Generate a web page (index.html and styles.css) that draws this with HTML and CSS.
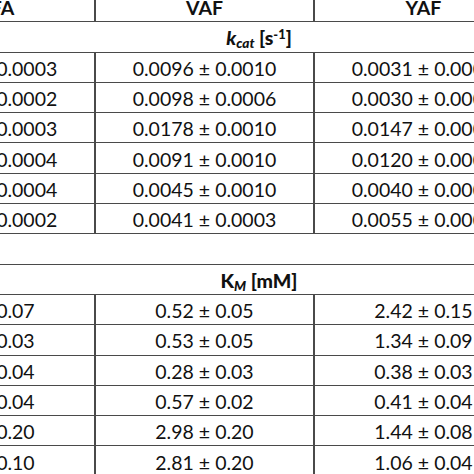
FILE: index.html
```html
<!DOCTYPE html>
<html>
<head>
<meta charset="utf-8">
<link rel="stylesheet" href="styles.css">
</head>
<body>
<div class="frame">
<table class="kin">
  <colgroup>
    <col class="c-label"><col class="c-data"><col class="c-data"><col class="c-data"><col class="c-data">
  </colgroup>
  <tr class="head">
    <th>Enzyme</th><th class="v first">AAFA</th><th class="v">VAF</th><th class="v">YAF</th><th class="v">AAF</th>
  </tr>
  <tr class="title">
    <td colspan="5"><b><i>k<sub>cat</sub></i> [s<sup>-1</sup>]</b></td>
  </tr>
  <tr><td>WT</td><td class="v">0.0101 ± 0.0003</td><td class="v">0.0096 ± 0.0010</td><td class="v">0.0031 ± 0.0002</td><td class="v">0.0012 ± 0.0001</td></tr>
  <tr><td>M1</td><td class="v">0.0089 ± 0.0002</td><td class="v">0.0098 ± 0.0006</td><td class="v">0.0030 ± 0.0002</td><td class="v">0.0011 ± 0.0001</td></tr>
  <tr><td>M2</td><td class="v">0.0112 ± 0.0003</td><td class="v">0.0178 ± 0.0010</td><td class="v">0.0147 ± 0.0007</td><td class="v">0.0024 ± 0.0002</td></tr>
  <tr><td>M3</td><td class="v">0.0105 ± 0.0004</td><td class="v">0.0091 ± 0.0010</td><td class="v">0.0120 ± 0.0006</td><td class="v">0.0019 ± 0.0001</td></tr>
  <tr><td>M4</td><td class="v">0.0067 ± 0.0004</td><td class="v">0.0045 ± 0.0010</td><td class="v">0.0040 ± 0.0003</td><td class="v">0.0009 ± 0.0001</td></tr>
  <tr><td>M5</td><td class="v">0.0052 ± 0.0002</td><td class="v">0.0041 ± 0.0003</td><td class="v">0.0055 ± 0.0004</td><td class="v">0.0008 ± 0.0001</td></tr>
  <tr class="blank"><td colspan="5"></td></tr>
  <tr class="title">
    <td colspan="5"><b>K<sub><i>M</i></sub> [mM]</b></td>
  </tr>
  <tr><td>WT</td><td class="v">0.71 ± 0.07</td><td class="v">0.52 ± 0.05</td><td class="v">2.42 ± 0.15</td><td class="v">1.10 ± 0.08</td></tr>
  <tr><td>M1</td><td class="v">0.46 ± 0.03</td><td class="v">0.53 ± 0.05</td><td class="v">1.34 ± 0.09</td><td class="v">0.95 ± 0.06</td></tr>
  <tr><td>M2</td><td class="v">0.33 ± 0.04</td><td class="v">0.28 ± 0.03</td><td class="v">0.38 ± 0.03</td><td class="v">0.61 ± 0.05</td></tr>
  <tr><td>M3</td><td class="v">0.49 ± 0.04</td><td class="v">0.57 ± 0.02</td><td class="v">0.41 ± 0.04</td><td class="v">0.72 ± 0.04</td></tr>
  <tr><td>M4</td><td class="v">2.65 ± 0.20</td><td class="v">2.98 ± 0.20</td><td class="v">1.44 ± 0.08</td><td class="v">1.83 ± 0.12</td></tr>
  <tr><td>M5</td><td class="v">2.37 ± 0.10</td><td class="v">2.81 ± 0.20</td><td class="v">1.06 ± 0.04</td><td class="v">1.52 ± 0.09</td></tr>
</table>
</div>
</body>
</html>
```

FILE: styles.css
```css
html, body {
  margin: 0;
  padding: 0;
  background: #ffffff;
}
.frame {
  width: 474px;
  height: 474px;
  overflow: hidden;
  position: relative;
}
.kin {
  border-collapse: collapse;
  table-layout: fixed;
  width: 996px;
  margin-left: -244px;
  margin-top: -9px;
  font-family: Lato, "Open Sans", sans-serif;
  font-size: 19.5px;
  color: #111111;
}
.c-label { width: 120px; }
.c-data { width: 219px; }
.kin tr { height: 30.3px; }
.kin th, .kin td {
  padding: 3px 0 0 0;
  text-align: center;
  vertical-align: middle;
  border-top: 1.5px solid #4a4a4a;
  border-bottom: 1.5px solid #4a4a4a;
  white-space: nowrap;
  line-height: 22px;
}
.kin th { font-weight: 700; }
.kin th.first { padding-left: 7px; }
.kin .v { border-left: 2px solid #4a4a4a; }
.title td { font-weight: 700; padding-left: 10px; }
.title sub { font-size: 0.7em; line-height: 0; vertical-align: -0.25em; }
.title sup { font-size: 0.66em; line-height: 0; vertical-align: 0.45em; }
```
